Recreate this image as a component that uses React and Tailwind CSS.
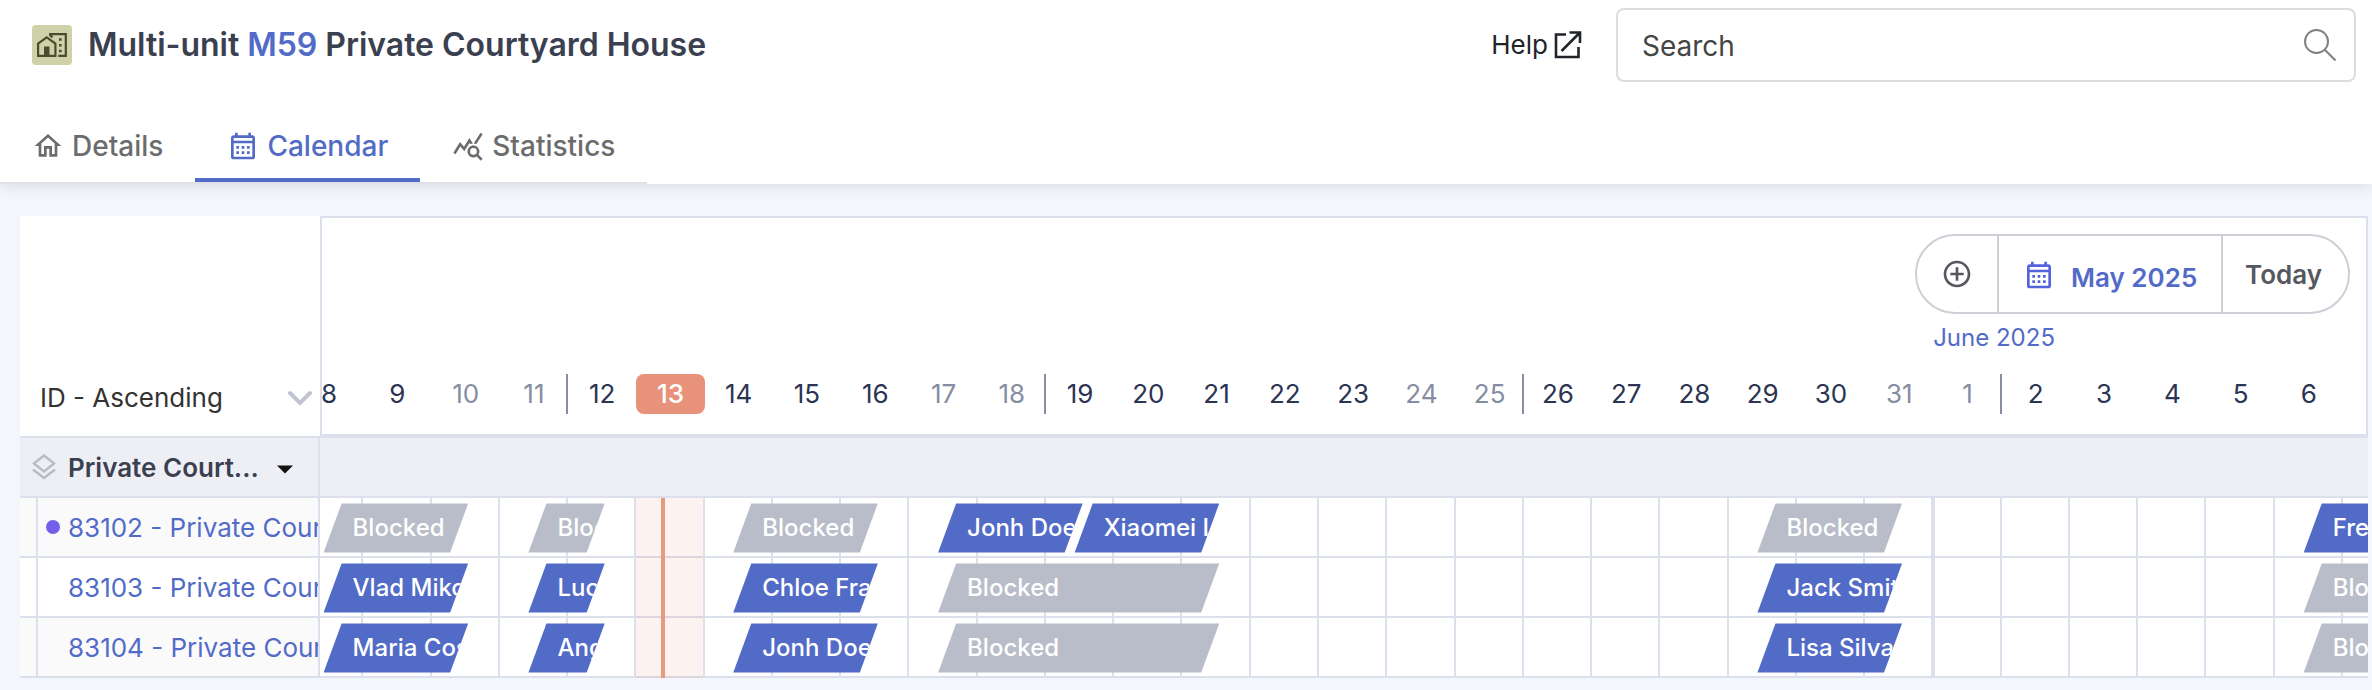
import {
  MdOutlineHome,
  MdOutlineCalendarMonth,
  MdOutlineQueryStats,
  MdControlPoint,
} from "react-icons/md";

const DAY_WIDTH = 68.28;
// The timeline is scrolled a little, so the first day starts left of its edge
const SCROLL_OFFSET = -25.4;
const FIRST_DAY = 8;

// Counted from May 1st, so 32 is June 1st
const days = Array.from({ length: 31 }, (_, i) => {
  const day = FIRST_DAY + i;
  return {
    day,
    label: day > 31 ? day - 31 : day,
    weekend: day % 7 === 3 || day % 7 === 4,
    today: day === 13,
    sunday: day % 7 === 4,
  };
});

const units = [
  {
    name: "83102 - Private Courtyard House",
    dot: true,
    bookings: [
      { start: 8, nights: 2, label: "Blocked", blocked: true },
      { start: 11, nights: 1, label: "Blocked", blocked: true },
      { start: 14, nights: 2, label: "Blocked", blocked: true },
      { start: 17, nights: 2, label: "Jonh Doe" },
      { start: 19, nights: 2, label: "Xiaomei Li" },
      { start: 29, nights: 2, label: "Blocked", blocked: true },
      { start: 37, nights: 2, label: "Fred" },
    ],
  },
  {
    name: "83103 - Private Courtyard House",
    bookings: [
      { start: 8, nights: 2, label: "Vlad Mikov" },
      { start: 11, nights: 1, label: "Lucas" },
      { start: 14, nights: 2, label: "Chloe Fran" },
      { start: 17, nights: 4, label: "Blocked", blocked: true },
      { start: 29, nights: 2, label: "Jack Smith" },
      { start: 37, nights: 2, label: "Blocked", blocked: true },
    ],
  },
  {
    name: "83104 - Private Courtyard House",
    bookings: [
      { start: 8, nights: 2, label: "Maria Costa" },
      { start: 11, nights: 1, label: "Angela" },
      { start: 14, nights: 2, label: "Jonh Doe" },
      { start: 17, nights: 4, label: "Blocked", blocked: true },
      { start: 29, nights: 2, label: "Lisa Silva" },
      { start: 37, nights: 2, label: "Blocked", blocked: true },
    ],
  },
];

const dayX = (day) => SCROLL_OFFSET + (day - FIRST_DAY) * DAY_WIDTH;

function Tab({ icon: Icon, label, active }) {
  return (
    <a
      className={`flex h-[76px] flex-col border-b-2 border-[#dee2e6] text-[28px] font-medium ${active ? "text-[#526bc7]" : "text-[#6c6c6c]"}`}
    >
      <span
        className={`flex flex-1 items-center gap-2 border-b-4 px-8 ${active ? "border-[#526bc7]" : "border-transparent"}`}
      >
        <Icon className="mt-1.5 size-8" />
        <span className="pt-1.5 leading-10">{label}</span>
      </span>
    </a>
  );
}

function HomeWorkIcon() {
  return (
    <svg className="h-6 w-[30px] text-[#4a4c2f]" viewBox="0 0 30 24" fill="none" stroke="currentColor" strokeWidth="2.200">
      <path d="M1.100 22.900V10.600L9.700 4.400l8.700 6.200v12.300z" />
      <path d="M7 13.500h5.500V23H7z" fill="currentColor" stroke="none" />
      <path d="M12 1.200h16.800v21.700h-7.600M12.500 1.500l3 3" />
      <path d="M22 5.200h2.600v2.600H22zM22 11h2.600v2.600H22zM22 16.700h2.600v2.600H22z" fill="currentColor" stroke="none" />
    </svg>
  );
}

function Header() {
  return (
    <header className="relative z-10 flex h-[184px] flex-col justify-between bg-white shadow-[0_2px_14px_rgba(0,0,0,0.11)]">
      <div className="flex items-start justify-between pt-2 pr-4 pl-8">
        <div className="flex items-center gap-4 pt-[17px]">
          <span className="flex size-10 items-center justify-center rounded bg-[#cfd2a9]">
            <HomeWorkIcon />
          </span>
          <h1 className="text-[32px] leading-10 font-semibold tracking-[-0.02px] whitespace-nowrap text-[#3a4050]">
            Multi-unit <span className="text-[#526bc7]">M59</span> Private Courtyard House
          </h1>
        </div>

        <div className="flex items-start">
          <a className="mr-[34px] flex items-center gap-1.5 pt-[17px] text-[26px] leading-10 text-[#212529]">
            Help
            <svg className="size-7" viewBox="0 0 28 28" fill="none" stroke="currentColor" strokeWidth="2.600">
              <path d="M12 3.500H2v22.500h22.500V16M15.500 1.500h10.500V12M26 1.500L7.500 20" />
            </svg>
          </a>
          <div className="flex h-[74px] w-[740px] items-center justify-between rounded-lg border-2 border-[#dcdce1] pr-[18px] pl-6 text-[28px] text-[#454545]">
            <span className="pt-0.5">Search</span>
            <svg className="size-8 text-[#808080]" viewBox="0 0 32 32" fill="none" stroke="currentColor" strokeWidth="2">
              <circle cx="12.500" cy="12.500" r="11.500" />
              <path d="M20.500 20.500L31.500 31.500" />
            </svg>
          </div>
        </div>
      </div>

      <nav className="flex">
        <Tab icon={MdOutlineHome} label="Details" />
        <Tab icon={MdOutlineCalendarMonth} label="Calendar" active />
        <Tab icon={MdOutlineQueryStats} label="Statistics" />
      </nav>
    </header>
  );
}

function Sidebar() {
  return (
    <aside className="w-[300px] shrink-0">
      <div className="flex h-[222px] items-end justify-between border-b-2 border-[#dcdfec] bg-white pr-2 pb-[18px] pl-5 text-[26px] leading-10 text-[#333]">
        ID - Ascending
        <svg className="mb-3 h-4 w-6 text-[#bfc4d0]" viewBox="0 0 24 16" fill="none" stroke="currentColor" strokeWidth="4">
          <path d="M2 3l10 10L22 3" strokeLinecap="round" />
        </svg>
      </div>

      <div className="flex h-[60px] items-center border-r-2 border-b-2 border-[#dcdfec] bg-[#eeeff5] pl-3 text-[26px] font-semibold text-[#3a4050]">
        <svg className="mr-3 h-[26px] w-6 text-[#b9bbc0]" viewBox="0 0 24 26" fill="none" stroke="currentColor" strokeWidth="2.400">
          <path d="M12 1.500L22.200 9.500 12 17.500 1.800 9.500zM1 15.500l11 8.500 11-8.500" />
        </svg>
        Private Court...
        <svg className="mt-1 ml-[18px] h-[9px] w-4 text-[#111]" viewBox="0 0 16 9" fill="currentColor">
          <path d="M0 .500h16L8 8.500z" />
        </svg>
      </div>

      {units.map((unit, i) => (
        <div
          key={unit.name}
          className={`flex h-[60px] overflow-hidden border-r-2 border-b-2 border-[#dcdfec] ${i % 2 === 0 ? "bg-[#fafafa]" : "bg-white"}`}
        >
          <div className="w-[18px] shrink-0 border-r-2 border-[#dcdfec]" />
          <div className="flex items-center overflow-hidden pl-2 text-[26px] whitespace-nowrap text-[#526bc7]">
            <span className={`mr-2 size-3.5 shrink-0 rounded-full ${unit.dot ? "bg-[#7360ea]" : ""}`} />
            {unit.name}
          </div>
        </div>
      ))}
    </aside>
  );
}

function TimelineHeader() {
  return (
    <div className="flex h-[220px] flex-col overflow-hidden border-2 border-[#dcdfec] bg-white">
      <div className="flex justify-end pt-4 pr-4">
        <div className="flex h-20 w-[435px] rounded-full border-2 border-[#cfced6] text-[26px] font-semibold text-[#555761]">
          <button className="flex w-[82px] items-center justify-center border-r-2 border-[#cfced6]">
            <MdControlPoint className="size-8" />
          </button>
          <button className="flex w-[224px] items-center border-r-2 border-[#cfced6] pt-1.5 pl-6 text-[#526bc7]">
            <MdOutlineCalendarMonth className="mr-4 mb-1 size-8 text-[#5363dc]" />
            May 2025
          </button>
          <button className="flex-1 pr-1">Today</button>
        </div>
      </div>

      <div className="mt-[9px] flex h-[51px] justify-end pr-[311px] text-2xl leading-[30px] text-[#526bc7]">
        June 2025
      </div>

      <div className="-ml-[27px] flex h-10 text-[26px]">
        {days.map((d) => (
          <div
            key={d.day}
            className={`flex w-[68.280px] shrink-0 items-center justify-center border-r-2 pb-0.5 pl-0.5 ${d.sunday ? "border-[#868da3]" : "border-transparent"} ${
              d.today
                ? "rounded-lg bg-[#e8927c] font-medium text-white"
                : d.weekend
                  ? "text-[#868da3]"
                  : "text-[#2b3452]"
            }`}
          >
            {d.label}
          </div>
        ))}
      </div>
    </div>
  );
}

function Booking({ booking }) {
  return (
    <div
      className={`absolute top-[5px] flex h-[50px] items-center overflow-hidden pl-[29px] text-2xl font-medium whitespace-nowrap text-white [clip-path:polygon(18px_0.5px,100%_0.5px,calc(100%-18px)_calc(100%-0.5px),0_calc(100%-0.5px))] ${booking.blocked ? "bg-[#b9bdc9]" : "bg-[#526bc7]"}`}
      style={{ left: dayX(booking.start) + 29, width: booking.nights * DAY_WIDTH + 8 }}
    >
      {booking.label}
    </div>
  );
}

function Timeline() {
  return (
    <section className="w-[2048px] shrink-0">
      <TimelineHeader />
      <div className="h-[62px] border-y-2 border-[#dcdfec] bg-[#eeeff5]" />

      <div className="relative overflow-hidden">
        {units.map((unit) => (
          <div key={unit.name} className="relative h-[60px] overflow-hidden border-b-2 border-[#dcdfec] bg-white">
            <div className="-ml-[25px] flex h-full">
              {days.map((d) => (
                <div
                  key={d.day}
                  className={`w-[68.280px] shrink-0 border-r-2 border-[#dcdfec] ${d.day === 32 ? "border-l-2" : ""}`}
                />
              ))}
            </div>
            {unit.bookings.map((b) => (
              <Booking key={b.start} booking={b} />
            ))}
          </div>
        ))}

        {/* Today: tinted column and current time marker */}
        <div className="absolute inset-y-0 w-[67px] bg-[#e8927c]/12" style={{ left: dayX(13) }} />
        <div className="absolute inset-y-0 left-[341px] w-1 bg-[#e8997f]" />
      </div>
    </section>
  );
}

export default function App() {
  return (
    <div className="h-[690px] w-[2372px] overflow-hidden bg-[#f3f6fb] font-['Inter',sans-serif]">
      <Header />
      <main className="flex pt-8 pl-5">
        <Sidebar />
        <Timeline />
      </main>
    </div>
  );
}
